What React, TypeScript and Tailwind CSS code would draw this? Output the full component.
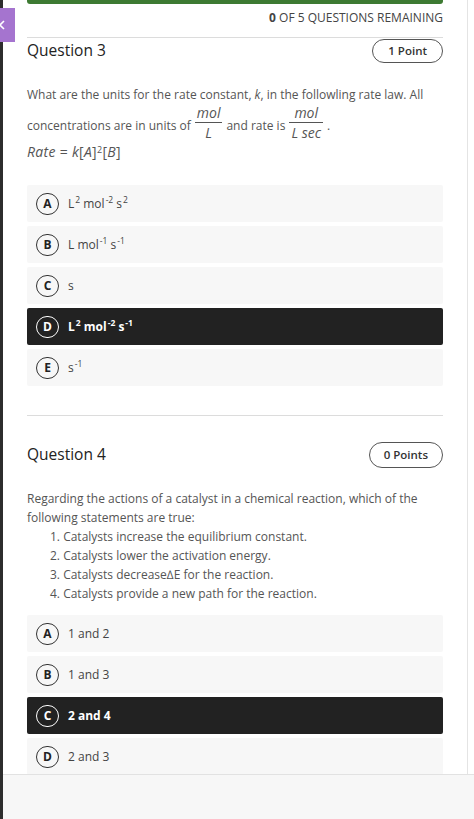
import React from 'react';

interface Option {
    letter: string;
    label: React.ReactNode;
    selected?: boolean;
}

const q3Options: Option[] = [
    { letter: 'A', label: <>L<sup>2</sup> mol<sup>-2</sup> s<sup>2</sup></> },
    { letter: 'B', label: <>L mol<sup>-1</sup> s<sup>-1</sup></> },
    { letter: 'C', label: <>s</> },
    { letter: 'D', label: <>L<sup>2</sup> mol<sup>-2</sup> s<sup>-1</sup></>, selected: true },
    { letter: 'E', label: <>s<sup>-1</sup></> },
];

const q4Options: Option[] = [
    { letter: 'A', label: '1 and 2' },
    { letter: 'B', label: '1 and 3' },
    { letter: 'C', label: '2 and 4', selected: true },
    { letter: 'D', label: '2 and 3' },
];

const Fraction: React.FC<{ top: string; bottom: string }> = ({ top, bottom }) => (
    <span className="inline-flex flex-col items-center mx-[4px] italic text-[14px] leading-[19px] text-[#555]">
        <span className="px-[2px]">{top}</span>
        <span className="w-full border-t border-[#555]" />
        <span className="px-[2px]">{bottom}</span>
    </span>
);

const OptionRow: React.FC<{ opt: Option }> = ({ opt }) => (
    <div
        className={`h-[37px] flex items-center pl-[9px] gap-[9px] rounded-[2px] ${
            opt.selected ? 'bg-[#222222] text-white font-bold' : 'bg-[#f7f7f7] text-[#444]'
        }`}
    >
        <span
            className={`w-[23px] h-[22px] rounded-full border flex items-center justify-center text-[12px] font-bold ${
                opt.selected ? 'border-white text-white' : 'border-[#333] text-[#222]'
            }`}
        >
            {opt.letter}
        </span>
        <span className="text-[12px] [&_sup]:text-[8.5px] [&_sup]:ml-[1px]">{opt.label}</span>
    </div>
);

const Pill: React.FC<{ text: string; tall?: boolean }> = ({ text, tall }) => (
    <span
        className={`${tall ? 'h-[26px] px-[14px]' : 'h-[24px] px-[15px]'} inline-flex items-center rounded-full border border-[#555] text-[11.5px] font-semibold text-[#333]`}
    >
        {text}
    </span>
);

export default function App() {
    return (
        <div className="relative w-[474px] h-[819px] overflow-hidden bg-white flex" style={{ fontFamily: '"Open Sans", "Liberation Sans", sans-serif' }}>
            <div className="w-[3px] bg-[#2d2d2d] shrink-0" />

            <div className="w-[465px] border-r border-[#e4e4e4] pl-[24px] pr-[24px] shrink-0">
                <div className="h-[4px] bg-[#3d7a32] rounded-b-[3px]" />
                <div className="mt-[4px] leading-[20px] text-right text-[12px] uppercase text-[#444]">
                    <span className="font-bold">0</span> of 5 questions remaining
                </div>
                <div className="mt-[9px] border-t border-[#dcdcdc]" />

                {/* Question 3 */}
                <div className="mt-[1px] h-[24px] flex items-center justify-between">
                    <h2 className="text-[15.5px] text-[#222]">Question 3</h2>
                    <Pill text="1 Point" />
                </div>

                <div className="mt-[22px] text-[12px] text-[#555] leading-[20px]">
                    <div>What are the units for the rate constant, <i>k</i>, in the followling rate law. All</div>
                    <div className="-mt-[2px] flex items-center">
                        <span className="pt-[6px]">concentrations are in units of</span>
                        <Fraction top="mol" bottom="L" />
                        <span className="pt-[6px]">and rate is</span>
                        <Fraction top="mol" bottom="L sec" />
                        <span className="pt-[6px]">.</span>
                    </div>
                    <div className="text-[14px] text-[#555] tracking-[0.3px]">
                        <i>Rate</i> = <i>k</i>[<i>A</i>]<sup className="text-[9px]">2</sup>[<i>B</i>]
                    </div>
                </div>

                <div className="mt-[23px] flex flex-col gap-[4px]">
                    {q3Options.map(o => (
                        <OptionRow key={o.letter} opt={o} />
                    ))}
                </div>

                <div className="mt-[29px] border-t border-[#dcdcdc]" />

                {/* Question 4 */}
                <div className="mt-[26px] h-[26px] flex items-center justify-between">
                    <h2 className="text-[15.5px] text-[#222]">Question 4</h2>
                    <Pill text="0 Points" tall />
                </div>

                <div className="mt-[21px] text-[12px] text-[#555] leading-[19px]">
                    <div>Regarding the actions of a catalyst in a chemical reaction, which of the</div>
                    <div>following statements are true:</div>
                    <ol className="pl-[23px]">
                        <li>1. Catalysts increase the equilibrium constant.</li>
                        <li>2. Catalysts lower the activation energy.</li>
                        <li>3. Catalysts decrease∆E for the reaction.</li>
                        <li>4. Catalysts provide a new path for the reaction.</li>
                    </ol>
                </div>

                <div className="mt-[12px] flex flex-col gap-[4px]">
                    {q4Options.map(o => (
                        <OptionRow key={o.letter} opt={o} />
                    ))}
                </div>
            </div>

            {/* side tab */}
            <div className="absolute left-0 top-[8px] w-[15px] h-[34px] bg-[#a574cf] flex items-center">
                <svg width="6" height="10" viewBox="0 0 6 10" className="-ml-[1px]">
                    <polyline points="5,1 1,5 5,9" fill="none" stroke="white" strokeWidth="1.6" />
                </svg>
            </div>

            {/* bottom bar */}
            <div className="absolute left-[3px] right-0 bottom-0 h-[45px] bg-[#f7f7f7] border-t border-[#e2e2e2]" />
        </div>
    );
}
